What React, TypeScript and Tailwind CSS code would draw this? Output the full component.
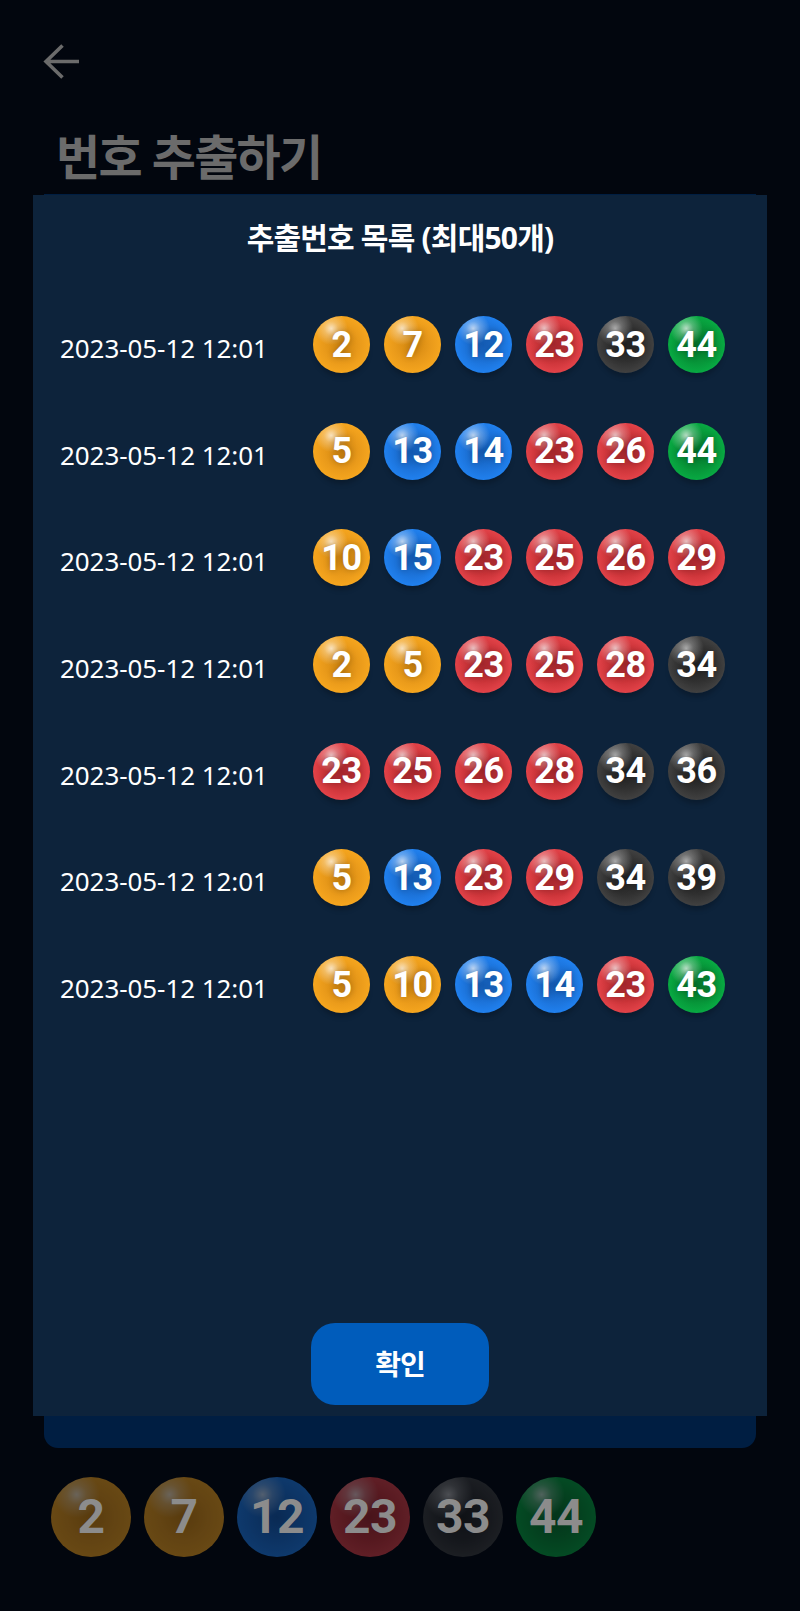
const FONT = "font-['Noto_Sans','Noto_Sans_CJK_KR',sans-serif]";

type Tone = "orange" | "blue" | "red" | "dark" | "green";

const toneClass: Record<Tone, string> = {
	orange:
		"bg-[radial-gradient(circle_at_32%_22%,rgba(255,255,255,0.72)_0%,rgba(255,255,255,0.3)_12%,rgba(255,255,255,0)_28%),radial-gradient(circle_at_50%_50%,#cf840e_0%,#e8991a_42%,#f5a51e_70%,#f6a61e_100%)]",
	blue: "bg-[radial-gradient(circle_at_32%_22%,rgba(255,255,255,0.72)_0%,rgba(255,255,255,0.3)_12%,rgba(255,255,255,0)_28%),radial-gradient(circle_at_50%_50%,#145cb4_0%,#1c72d8_42%,#2080ee_70%,#2080ee_100%)]",
	red: "bg-[radial-gradient(circle_at_32%_22%,rgba(255,255,255,0.72)_0%,rgba(255,255,255,0.3)_12%,rgba(255,255,255,0)_28%),radial-gradient(circle_at_50%_50%,#a9282e_0%,#cb3439_42%,#e24248_70%,#e44248_100%)]",
	dark: "bg-[radial-gradient(circle_at_32%_22%,rgba(255,255,255,0.62)_0%,rgba(255,255,255,0.28)_12%,rgba(255,255,255,0)_30%),radial-gradient(circle_at_50%_50%,#222222_0%,#303030_42%,#454545_78%,#4a4a4a_100%)]",
	green:
		"bg-[radial-gradient(circle_at_32%_22%,rgba(255,255,255,0.72)_0%,rgba(255,255,255,0.3)_12%,rgba(255,255,255,0)_28%),radial-gradient(circle_at_50%_50%,#06752c_0%,#079338_42%,#08a942_70%,#08aa42_100%)]",
};

function toneOf(n: number): Tone {
	if (n <= 10) return "orange";
	if (n <= 20) return "blue";
	if (n <= 30) return "red";
	if (n <= 40) return "dark";
	return "green";
}

function Ball({ n }: { n: number }) {
	return (
		<div
			className={`flex h-[57px] w-[57px] shrink-0 items-center justify-center rounded-full font-['Roboto',sans-serif] text-[36px] font-bold leading-none tracking-[-0.5px] text-white shadow-[0_6px_5px_-2px_rgba(0,0,0,0.22)] [text-shadow:0_0_6px_rgba(0,0,0,0.25)] ${toneClass[toneOf(n)]}`}
		>
			{n}
		</div>
	);
}

// dimmed copy behind the dialog, the text keeps its own grey
function BigBall({ n }: { n: number }) {
	return (
		<div className="relative flex h-[80px] w-[80px] shrink-0 items-center justify-center rounded-full font-['Roboto',sans-serif] text-[48px] font-bold leading-none tracking-[-0.5px] text-[#8c8c8c]">
			<div className={`absolute inset-0 rounded-full opacity-[0.42] ${toneClass[toneOf(n)]}`} />
			<span className="relative">{n}</span>
		</div>
	);
}

const rows = [
	[2, 7, 12, 23, 33, 44],
	[5, 13, 14, 23, 26, 44],
	[10, 15, 23, 25, 26, 29],
	[2, 5, 23, 25, 28, 34],
	[23, 25, 26, 28, 34, 36],
	[5, 13, 23, 29, 34, 39],
	[5, 10, 13, 14, 23, 43],
];

export default function App() {
	return (
		<div className={`relative h-[1611px] w-[800px] overflow-hidden bg-[#02060e] ${FONT}`}>
			{/* page underneath the dialog */}
			<div className="flex h-full flex-col">
				<svg
					className="ml-[43px] mt-[44px] h-[36px] w-[36px] shrink-0 text-[#6b6b6b]"
					fill="none"
					stroke="currentColor"
					strokeWidth="3.6"
					viewBox="0 0 36 36"
				>
					<path d="M36 17.5H3M19.5 1.5 3 17.5 19.5 33.5" />
				</svg>
				<h1 className="ml-[56px] mt-[47px] text-[48px] font-bold leading-[60px] tracking-[-1.7px] text-[#6b6b6b]">
					번호 추출하기
				</h1>
				<div className="mx-[44px] mt-[7px] h-[254px] shrink-0 grow rounded-b-[14px] bg-[#001e42]" />
				<div className="mb-[54px] ml-[51px] mt-[29px] flex gap-[13px]">
					{rows[0].map((n) => (
						<BigBall key={n} n={n} />
					))}
				</div>
			</div>

			{/* dialog */}
			<div className="absolute bottom-[195px] left-[33px] right-[33px] top-[195px] flex flex-col bg-[#0d233b] px-[27px]">
				<h2 className="mt-[23px] text-center text-[30px] font-bold leading-[40px] tracking-[-0.8px] text-white">
					추출번호 목록 (최대50개)
				</h2>
				<div className="mt-[58px] flex flex-col gap-[49.7px]">
					{rows.map((row, i) => (
						<div className="flex items-center justify-between" key={i}>
							<span className="mt-[8px] text-[26px] leading-[49px] tracking-[-0.07px] text-white">
								2023-05-12 12:01
							</span>
							<div className="mr-[15px] flex gap-[14px]">
								{row.map((n, j) => (
									<Ball key={j} n={n} />
								))}
							</div>
						</div>
					))}
				</div>
				<button className="mx-auto mb-[11px] mt-auto h-[82px] w-[178px] rounded-[24px] bg-[#005cbb] text-[28px] font-bold tracking-[-1px] text-white">
					확인
				</button>
			</div>
		</div>
	);
}
